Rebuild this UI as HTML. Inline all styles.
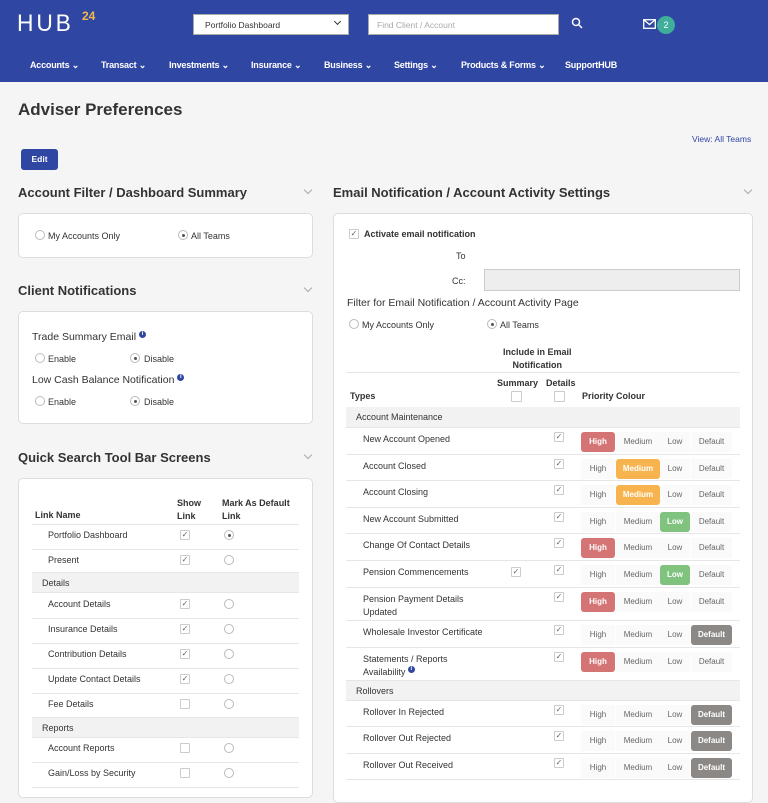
<!DOCTYPE html>
<html><head><meta charset="utf-8"><style>
*{box-sizing:border-box;margin:0;padding:0}
body{width:768px;height:782px;overflow:hidden;background:#f5f5f5;font-family:"Liberation Sans",sans-serif;color:#333;position:relative}
.a{position:absolute}
.hdr{left:0;top:0;width:768px;height:82px;background:#2f46a3}
.nav{color:#fff;font-size:9px;font-weight:bold;top:60px;letter-spacing:-0.2px}
.h2{font-size:13px;font-weight:bold;color:#333}
.chev{width:6px;height:6px;border-right:1.3px solid #aaa;border-bottom:1.3px solid #aaa;transform:rotate(45deg)}
.card{background:#fff;border:1px solid #ddd;border-radius:5px}
.t{font-size:9px;color:#333;white-space:nowrap}
.cb{width:10px;height:10px;border:1px solid #ccc;background:#fff;border-radius:1px;font-size:8px;color:#666;line-height:8px;text-align:center}
.rd{width:10px;height:10px;border:1px solid #bbb;border-radius:50%;background:#fff}
.rd.on::after{content:"";position:absolute;left:2.5px;top:2.5px;width:3px;height:3px;border-radius:50%;background:#555}
.row{left:0;border-bottom:1.5px solid #e6e6e6}
.grp{background:#f2f2f2;border-bottom:1.5px solid #e6e6e6}
.btn{height:20px;top:4px;font-size:8px;color:#666;text-align:center;line-height:20px;background:#fafafa}
.hi{background:#d47474;color:#fff;font-weight:bold;border-radius:3px}
.me{background:#f7b44e;color:#fff;font-weight:bold;border-radius:3px}
.lo{background:#7fc37f;color:#fff;font-weight:bold;border-radius:3px}
.de{background:#8c8886;color:#fff;font-weight:bold;border-radius:3px}
.info{display:inline-block;width:7px;height:7px;border-radius:50%;background:#2f46a3;color:#fff;font-size:6px;line-height:7px;text-align:center;font-weight:bold;vertical-align:top}
</style></head><body>
<div class="a hdr"></div>
<div class="a" style="left:17px;top:10px;color:#fff;font-size:24px;font-weight:normal;letter-spacing:3px;transform:scaleX(0.95);transform-origin:left">HUB</div>
<div class="a" style="left:82px;top:9px;color:#f2b84b;font-size:12px;font-weight:bold">24</div>
<div class="a" style="left:193px;top:14px;width:156px;height:21px;background:#fff;border:1px solid #aaa"><span class="t" style="position:absolute;left:11px;top:5px;font-size:8.5px">Portfolio Dashboard</span><span class="chev a" style="right:8px;top:4px;border-color:#333;width:5px;height:5px"></span></div>
<div class="a" style="left:368px;top:14px;width:191px;height:21px;background:#fff;border:1px solid #aaa"><span class="t" style="position:absolute;left:8px;top:5px;font-size:8.5px;color:#aaa">Find Client / Account</span></div>
<svg class="a" style="left:571px;top:17px" width="12" height="12"><circle cx="5" cy="5" r="3.5" stroke="#fff" stroke-width="1.5" fill="none"/><path d="M7.5 7.5L11 11" stroke="#fff" stroke-width="1.5"/></svg>
<svg class="a" style="left:643px;top:19px" width="13" height="10"><rect x="0.7" y="0.7" width="11.6" height="8.6" fill="none" stroke="#fff" stroke-width="1.3"/><path d="M1 1L6.5 5.5L12 1" stroke="#fff" stroke-width="1.3" fill="none"/></svg>
<div class="a" style="left:657px;top:16px;width:18px;height:18px;border-radius:50%;background:#3fae9a;color:#fff;font-size:9px;text-align:center;line-height:18px">2</div>
<div class="a nav" style="left:30px">Accounts ⌄</div>
<div class="a nav" style="left:101px">Transact ⌄</div>
<div class="a nav" style="left:169px">Investments ⌄</div>
<div class="a nav" style="left:251px">Insurance ⌄</div>
<div class="a nav" style="left:324px">Business ⌄</div>
<div class="a nav" style="left:394px">Settings ⌄</div>
<div class="a nav" style="left:461px">Products &amp; Forms ⌄</div>
<div class="a nav" style="left:565px">SupportHUB</div>

<div class="a" style="left:18px;top:100px;font-size:17px;font-weight:bold;color:#333">Adviser Preferences</div>
<div class="a" style="left:692px;top:134px;font-size:8.5px;color:#2f46a3">View: All Teams</div>
<div class="a" style="left:21px;top:149px;width:37px;height:21px;background:#2f46a3;border-radius:3px;color:#fff;font-size:8.5px;font-weight:bold;text-align:center;line-height:21px">Edit</div>

<div class="a h2" style="left:18px;top:185px">Account Filter / Dashboard Summary</div>
<div class="a chev" style="left:305px;top:187px"></div>
<div class="a card" style="left:18px;top:213px;width:295px;height:45px"></div>
<div class="a rd" style="left:35px;top:230px"></div><div class="a t" style="left:48px;top:231px">My Accounts Only</div>
<div class="a rd on" style="left:178px;top:230px"></div><div class="a t" style="left:191px;top:231px">All Teams</div>

<div class="a h2" style="left:18px;top:283px">Client Notifications</div>
<div class="a chev" style="left:305px;top:285px"></div>
<div class="a card" style="left:18px;top:311px;width:295px;height:113px"></div>
<div class="a" style="left:32px;top:331px;font-size:10.5px">Trade Summary Email <span class="info">i</span></div>
<div class="a rd" style="left:35px;top:353px"></div><div class="a t" style="left:48px;top:354px">Enable</div>
<div class="a rd on" style="left:130px;top:353px"></div><div class="a t" style="left:144px;top:354px">Disable</div>
<div class="a" style="left:32px;top:374px;font-size:10.5px">Low Cash Balance Notification <span class="info">i</span></div>
<div class="a rd" style="left:35px;top:396px"></div><div class="a t" style="left:48px;top:397px">Enable</div>
<div class="a rd on" style="left:130px;top:396px"></div><div class="a t" style="left:144px;top:397px">Disable</div>

<div class="a h2" style="left:18px;top:450px">Quick Search Tool Bar Screens</div>
<div class="a chev" style="left:305px;top:452px"></div>
<div class="a card" style="left:18px;top:478px;width:295px;height:320px"></div>
<div class="a" style="left:32px;top:496px;width:267px;height:300px">
<div class="a t" style="left:3px;top:14px;font-weight:bold">Link Name</div>
<div class="a t" style="left:145px;top:1px;font-weight:bold;line-height:13px">Show<br>Link</div>
<div class="a t" style="left:190px;top:1px;font-weight:bold;line-height:13px">Mark As Default<br>Link</div>
<div class="a row" style="top:28px;width:267px;height:0;border-bottom:1.5px solid #e6e6e6"></div>
</div>
<div id="lt"></div>

<div class="a h2" style="left:333px;top:185px">Email Notification / Account Activity Settings</div>
<div class="a chev" style="left:745px;top:187px"></div>
<div class="a card" style="left:333px;top:213px;width:420px;height:590px"></div>
<div class="a cb" style="left:349px;top:229px">✓</div>
<div class="a t" style="left:364px;top:229px;font-weight:bold">Activate email notification</div>
<div class="a t" style="left:456px;top:251px">To</div>
<div class="a t" style="left:452px;top:276px">Cc:</div>
<div class="a" style="left:484px;top:269px;width:256px;height:22px;background:#eee;border:1px solid #ccc"></div>
<div class="a" style="left:347px;top:297px;font-size:10.5px">Filter for Email Notification / Account Activity Page</div>
<div class="a rd" style="left:349px;top:319px"></div><div class="a t" style="left:362px;top:320px">My Accounts Only</div>
<div class="a rd on" style="left:487px;top:319px"></div><div class="a t" style="left:500px;top:320px">All Teams</div>
<div class="a t" style="left:503px;top:346px;font-weight:bold;line-height:13px;text-align:center">Include in Email<br>Notification</div>
<div class="a" style="left:346px;top:372px;width:394px;border-bottom:1.5px solid #e6e6e6"></div>
<div class="a t" style="left:350px;top:391px;font-weight:bold">Types</div>
<div class="a t" style="left:497px;top:378px;font-weight:bold">Summary</div>
<div class="a t" style="left:546px;top:378px;font-weight:bold">Details</div>
<div class="a cb" style="left:511px;top:391px;width:11px;height:11px"></div>
<div class="a cb" style="left:554px;top:391px;width:11px;height:11px"></div>
<div class="a t" style="left:582px;top:391px;font-weight:bold">Priority Colour</div>
<div id="rt"></div>

<script>
var L=[[525,25,'Portfolio Dashboard',1,1],[550,23,'Present',1,0],[573,20,'Details','g'],[594,25,'Account Details',1,0],[619,25,'Insurance Details',1,0],[644,25,'Contribution Details',1,0],[669,25,'Update Contact Details',1,0],[694,24,'Fee Details',0,0],[718,20,'Reports','g'],[738,25,'Account Reports',0,0],[763,25,'Gain/Loss by Security',0,0]];
var h='';
L.forEach(function(r){
 if(r[3]=='g'){h+='<div class="a grp" style="left:32px;top:'+r[0]+'px;width:267px;height:'+r[1]+'px"><span class="t a" style="left:10px;top:5px">'+r[2]+'</span></div>';return;}
 h+='<div class="a" style="left:32px;top:'+r[0]+'px;width:267px;height:'+r[1]+'px;border-bottom:1.5px solid #e6e6e6"><span class="t a" style="left:16px;top:5px">'+r[2]+'</span><div class="a cb" style="left:148px;top:5px">'+(r[3]?'✓':'')+'</div><div class="a rd'+(r[4]?' on':'')+'" style="left:192px;top:5px;position:absolute"></div></div>';
});
document.getElementById('lt').innerHTML=h;
var R=[[407,21,'Account Maintenance','g'],[428,27,'New Account Opened',0,'h'],[455,26,'Account Closed',0,'m'],[481,27,'Account Closing',0,'m'],[508,26,'New Account Submitted',0,'l'],[534,27,'Change Of Contact Details',0,'h'],[561,27,'Pension Commencements',1,'l'],[588,33,'Pension Payment Details<br>Updated',0,'h'],[621,27,'Wholesale Investor Certificate',0,'d'],[648,33,'Statements / Reports<br>Availability <span class="info">i</span>',0,'h'],[681,20,'Rollovers','g'],[701,26,'Rollover In Rejected',0,'d'],[727,27,'Rollover Out Rejected',0,'d'],[754,26,'Rollover Out Received',0,'d']];
h='';
R.forEach(function(r){
 if(r[3]=='g'){h+='<div class="a grp" style="left:346px;top:'+r[0]+'px;width:394px;height:'+r[1]+'px"><span class="t a" style="left:10px;top:5px">'+r[2]+'</span></div>';return;}
 var b=[['High',235,34,'h','hi'],['Medium',270,44,'m','me'],['Low',314,30,'l','lo'],['Default',345,41,'d','de']];
 var s='<div class="a" style="left:346px;top:'+r[0]+'px;width:394px;height:'+r[1]+'px;border-bottom:1.5px solid #e6e6e6"><span class="t a" style="left:17px;top:5px;line-height:13px">'+r[2]+'</span>'+(r[3]?'<div class="a cb" style="left:165px;top:6px">✓</div>':'')+'<div class="a cb" style="left:208px;top:4px">✓</div>';
 b.forEach(function(x){s+='<div class="a btn'+(x[3]==r[4]?' '+x[4]:'')+'" style="left:'+x[1]+'px;width:'+x[2]+'px">'+x[0]+'</div>';});
 h+=s+'</div>';
});
document.getElementById('rt').innerHTML=h;
</script>
</body></html>
